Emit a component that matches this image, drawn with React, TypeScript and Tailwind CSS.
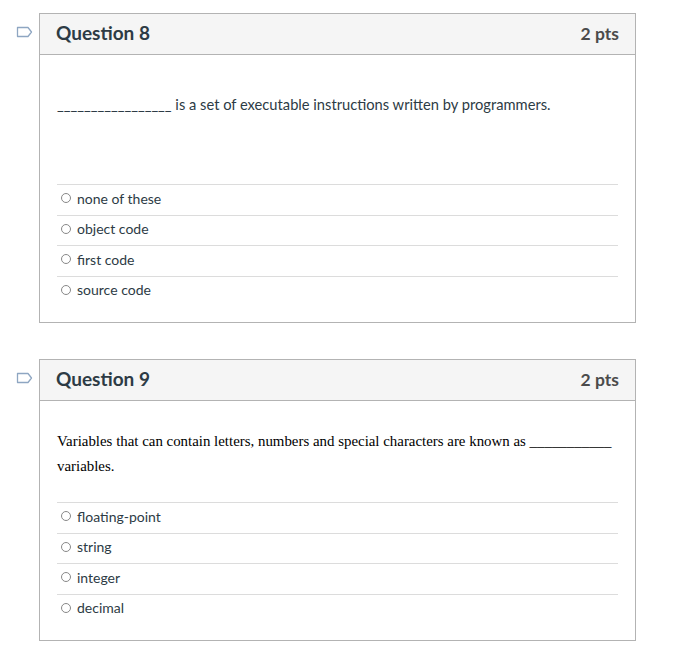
import React from 'react';

const lato = { fontFamily: 'Lato, "Open Sans", sans-serif' };

function Bookmark() {
  return (
    <svg width="17" height="12" viewBox="0 0 17 12" className="mt-[13px] ml-[16px]">
      <path d="M1.5 1.5 H12 L15.5 6 L12 10.5 H1.5 Z" fill="none" stroke="#8ea6c2" strokeWidth="1.3" strokeLinejoin="round" />
    </svg>
  );
}

function Options({ items }: { items: string[] }) {
  return (
    <div>
      {items.map((t) => (
        <div key={t} className="flex h-[30.5px] items-center border-t border-[#dcdcdc] pb-[3px] pl-[4px] text-[14px] text-[#2d3b45]">
          <span className="mr-[6px] inline-block h-[10px] w-[10px] rounded-full border border-[#888]" />
          {t}
        </div>
      ))}
    </div>
  );
}

function Question({
  n,
  children,
  items,
}: {
  n: number;
  children: React.ReactNode;
  items: string[];
}) {
  return (
    <div className="flex">
      <div className="w-[39px] shrink-0">
        <Bookmark />
      </div>
      <div className="w-[597px] border border-[#b3b3b3] bg-white">
        <div className="flex h-[41px] items-center justify-between border-b border-[#b3b3b3] bg-[#f5f5f5] px-[16px]">
          <span className="pb-[1px] text-[19px] font-bold text-[#2d3b45]">Question {n}</span>
          <span className="pt-[1px] text-[17.5px] font-bold text-[#4b4b4b]">2 pts</span>
        </div>
        <div className="px-[17px] pb-[16px]">
          {children}
          <Options items={items} />
        </div>
      </div>
    </div>
  );
}

export default function App() {
  return (
    <div className="min-h-[655px] w-[678px] bg-white pt-[13px]" style={lato}>
      <Question n={8} items={['none of these', 'object code', 'first code', 'source code']}>
        <p className="pt-[39px] pb-[70px] text-[14.7px] leading-[20px] text-[#2d3b45]">
          _________________ is a set of executable instructions written by programmers.
        </p>
      </Question>
      <div className="h-[36px]" />
      <Question n={9} items={['floating-point', 'string', 'integer', 'decimal']}>
        <p
          className="pt-[28px] pb-[23px] text-[14.9px] leading-[25px] text-black"
          style={{ fontFamily: '"Liberation Serif", "Times New Roman", serif' }}
        >
          Variables that can contain letters, numbers and special characters are known as ___________ variables.
        </p>
      </Question>
    </div>
  );
}
